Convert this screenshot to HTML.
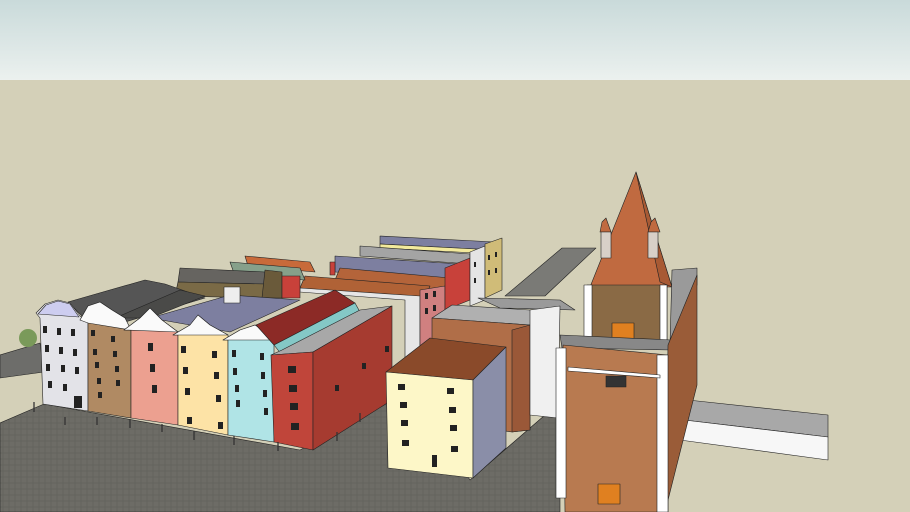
<!DOCTYPE html>
<html><head><meta charset="utf-8"><style>html,body{margin:0;padding:0;width:910px;height:512px;overflow:hidden}svg{display:block}</style></head>
<body>
<svg width="910" height="512" viewBox="0 0 910 512" xmlns="http://www.w3.org/2000/svg" stroke="#222" stroke-width="0.6" stroke-linejoin="round">
<defs>
<linearGradient id="sky" x1="0" y1="0" x2="0" y2="1"><stop offset="0" stop-color="#c9dada"/><stop offset="1" stop-color="#ecf1ef"/></linearGradient>
<pattern id="pav" width="6" height="6" patternUnits="userSpaceOnUse"><rect width="6" height="6" fill="#6d6c66" stroke="none"/><path d="M0 3h6M3 0v6" stroke="#62615b" stroke-width="0.7"/></pattern>
</defs>
<rect x="0" y="0" width="910" height="81" fill="url(#sky)" stroke="none"/>
<rect x="0" y="80" width="910" height="432" fill="#d4d0b8" stroke="none"/>
<polygon points="0,355 40,343 44,372 0,378" fill="#6d6d6a"/>
<polygon points="0,423 44,404 300,450 392,400 432,420 470,480 560,402 560,512 0,512" fill="url(#pav)"/>
<polygon points="505,296 562,248 596,248 545,296" fill="#7a7a76"/>
<polygon points="688,400 828,415 828,437 684,420" fill="#a8a8a8"/>
<polygon points="684,420 828,437 828,460 680,440" fill="#f7f7f7"/>
<polygon points="380,236 495,242 495,250 380,244" fill="#7d7fa0"/>
<polygon points="380,244 495,250 495,254 380,248" fill="#f3ea9c"/>
<polygon points="360,246 470,254 470,264 360,256" fill="#a4a4a4"/>
<polygon points="335,256 460,264 460,280 335,272" fill="#7d7fa0"/>
<polygon points="330,262 335,262 335,275 330,275" fill="#c8413a"/>
<polygon points="340,268 450,278 445,290 335,280" fill="#b4643a"/>
<polygon points="305,276 430,286 425,298 300,288" fill="#b06236"/>
<polygon points="300,288 420,296 420,360 405,365 405,300 300,292" fill="#e6e6e6"/>
<polygon points="420,290 445,286 445,350 420,360" fill="#d08080"/>
<polygon points="445,268 470,258 470,300 445,310" fill="#c8413a"/>
<polygon points="470,252 485,246 485,300 470,306" fill="#e4e4e4"/>
<polygon points="485,244 502,238 502,290 485,298" fill="#d0bc78"/>
<polygon points="245,256 310,262 315,272 248,266" fill="#c86a3a"/>
<polygon points="230,262 300,268 305,280 235,276" fill="#86a08a"/>
<polygon points="180,268 265,272 265,284 178,282" fill="#666460"/>
<polygon points="178,282 265,284 262,298 175,296" fill="#7a6a46"/>
<polygon points="265,270 282,272 282,298 262,298" fill="#6a5a3a"/>
<polygon points="282,276 300,276 300,298 282,298" fill="#c8413a"/>
<polygon points="68,302 145,280 165,284 205,298 125,322 88,322" fill="#555"/>
<polygon points="115,318 180,290 205,296 150,318" fill="#4a4a48"/>
<polygon points="150,318 230,295 300,300 230,332" fill="#7d7fa0"/>
<rect x="224" y="287" width="16" height="16" fill="#eee"/>
<polygon points="432,318 452,305 560,312 530,325" fill="#b0b0b0"/>
<polygon points="478,298 560,300 575,310 500,308" fill="#9a9a9a"/>
<polygon points="432,318 530,325 530,430 512,432 432,420" fill="#b06e48"/>
<polygon points="512,330 530,325 530,430 512,432" fill="#9a5838"/>
<polygon points="530,310 560,306 558,418 530,415" fill="#f0f0f0"/>
<polygon points="36,313 45,304 58,300 70,303 80,316 88,322 88,411 43,404 40,318" fill="#e3e3e8"/>
<polygon points="38,314 46,305 58,301 70,304 79,317" fill="#cdcdf0"/>
<polygon points="80,320 88,306 100,302 112,310 125,318 131,330 131,418 88,411 88,322" fill="#b08a63"/>
<polygon points="80,320 88,306 100,302 112,310 125,318 131,330 88,323" fill="#fafafa"/>
<polygon points="124,330 140,318 150,308 162,320 178,332 178,425 131,418 131,330" fill="#eca090"/>
<polygon points="124,330 140,318 150,308 162,320 178,332" fill="#fafafa"/>
<polygon points="173,335 190,325 198,315 210,325 228,335 228,435 178,425 178,335" fill="#fde3a6"/>
<polygon points="173,335 190,325 198,315 210,325 228,335" fill="#fafafa"/>
<polygon points="223,340 240,330 255,325 270,335 274,340 274,442 228,435 228,340" fill="#b0e4e6"/>
<polygon points="223,340 240,330 255,325 270,335 274,340" fill="#fafafa"/>
<polygon points="256,325 335,290 355,303 274,345" fill="#8c2a26"/>
<polygon points="274,345 355,303 360,312 282,355" fill="#84c8c6"/>
<polygon points="271,355 282,350 360,310 392,306 313,352" fill="#a8a8a8"/>
<polygon points="271,355 313,352 313,450 274,442" fill="#c0453a"/>
<polygon points="313,352 392,306 392,400 313,450" fill="#a63b30"/>
<polygon points="386,372 430,338 506,347 473,380" fill="#8a4a2a"/>
<polygon points="386,372 473,380 473,478 388,468" fill="#fdf7c8"/>
<polygon points="473,380 506,347 506,448 473,478" fill="#8a8ea8"/>
<polygon points="636,172 590,287 672,287" fill="#c06a40"/>
<polygon points="636,172 672,287 660,282" fill="#a85a34"/>
<polygon points="602,222 606,218 611,232 600,232" fill="#c06a40"/>
<rect x="601" y="232" width="10" height="26" fill="#d8d0c8"/>
<polygon points="651,222 655,218 660,232 648,232" fill="#c06a40"/>
<rect x="648" y="232" width="10" height="26" fill="#d8d0c8"/>
<rect x="587" y="285" width="80" height="60" fill="#8a6a45"/>
<rect x="584" y="285" width="8" height="55" fill="#fff"/>
<rect x="660" y="285" width="7" height="55" fill="#fff"/>
<rect x="612" y="323" width="22" height="18" fill="#e08020"/>
<polygon points="672,270 697,268 697,285 670,345" fill="#9a9a9a"/>
<polygon points="560,335 672,340 672,350 562,348" fill="#888"/>
<polygon points="563,345 668,355 668,512 565,512" fill="#b87a50"/>
<polygon points="668,345 697,275 697,385 665,512" fill="#9a5c38"/>
<rect x="556" y="348" width="10" height="150" fill="#fff"/>
<rect x="657" y="355" width="11" height="157" fill="#fff"/>
<polygon points="568,367 660,375 660,378 568,371" fill="#fff"/>
<rect x="606" y="376" width="20" height="11" fill="#333"/>
<rect x="598" y="484" width="22" height="20" fill="#e08020"/>
<g fill="#222" stroke="none">
<rect x="43" y="326" width="4" height="7"/><rect x="57" y="328" width="4" height="7"/><rect x="71" y="329" width="4" height="7"/>
<rect x="45" y="345" width="4" height="7"/><rect x="59" y="347" width="4" height="7"/><rect x="73" y="349" width="4" height="7"/>
<rect x="46" y="364" width="4" height="7"/><rect x="61" y="365" width="4" height="7"/><rect x="75" y="367" width="4" height="7"/>
<rect x="48" y="381" width="4" height="7"/><rect x="63" y="384" width="4" height="7"/><rect x="74" y="396" width="8" height="12"/>
<rect x="91" y="330" width="4" height="6"/><rect x="111" y="336" width="4" height="6"/><rect x="93" y="349" width="4" height="6"/><rect x="113" y="351" width="4" height="6"/>
<rect x="95" y="362" width="4" height="6"/><rect x="115" y="366" width="4" height="6"/><rect x="97" y="378" width="4" height="6"/><rect x="116" y="380" width="4" height="6"/><rect x="98" y="392" width="4" height="6"/>
<rect x="148" y="343" width="5" height="8"/><rect x="150" y="364" width="5" height="8"/><rect x="152" y="385" width="5" height="8"/>
<rect x="181" y="346" width="5" height="7"/><rect x="212" y="351" width="5" height="7"/><rect x="183" y="367" width="5" height="7"/><rect x="214" y="372" width="5" height="7"/>
<rect x="185" y="388" width="5" height="7"/><rect x="216" y="395" width="5" height="7"/><rect x="187" y="417" width="5" height="7"/><rect x="218" y="422" width="5" height="7"/>
<rect x="232" y="350" width="4" height="7"/><rect x="260" y="353" width="4" height="7"/><rect x="233" y="368" width="4" height="7"/><rect x="261" y="372" width="4" height="7"/>
<rect x="235" y="385" width="4" height="7"/><rect x="263" y="390" width="4" height="7"/><rect x="236" y="400" width="4" height="7"/><rect x="264" y="408" width="4" height="7"/>
<rect x="288" y="366" width="8" height="7"/><rect x="289" y="385" width="8" height="7"/><rect x="290" y="403" width="8" height="7"/><rect x="291" y="423" width="8" height="7"/>
<rect x="335" y="385" width="4" height="6"/><rect x="362" y="363" width="4" height="6"/><rect x="385" y="346" width="4" height="6"/>
<rect x="398" y="384" width="7" height="6"/><rect x="447" y="388" width="7" height="6"/><rect x="400" y="402" width="7" height="6"/><rect x="449" y="407" width="7" height="6"/>
<rect x="401" y="420" width="7" height="6"/><rect x="450" y="425" width="7" height="6"/><rect x="402" y="440" width="7" height="6"/><rect x="451" y="446" width="7" height="6"/>
<rect x="432" y="455" width="5" height="12"/>
<rect x="425" y="293" width="3" height="6"/><rect x="433" y="291" width="3" height="6"/><rect x="425" y="308" width="3" height="6"/><rect x="433" y="305" width="3" height="6"/>
<rect x="488" y="255" width="2" height="5"/><rect x="495" y="252" width="2" height="5"/><rect x="488" y="270" width="2" height="5"/><rect x="495" y="268" width="2" height="5"/>
<rect x="474" y="262" width="2" height="5"/><rect x="474" y="278" width="2" height="5"/>
</g>
<circle cx="28" cy="338" r="9" fill="#7a9a5a" stroke="none"/>
<g stroke="#333" stroke-width="1.3">
<line x1="34" y1="402" x2="34" y2="412"/><line x1="65" y1="417" x2="65" y2="425"/><line x1="97" y1="417" x2="97" y2="425"/>
<line x1="130" y1="419" x2="130" y2="428"/><line x1="162" y1="424" x2="162" y2="432"/><line x1="194" y1="431" x2="194" y2="440"/>
<line x1="234" y1="436" x2="234" y2="445"/><line x1="278" y1="442" x2="278" y2="451"/><line x1="337" y1="432" x2="337" y2="441"/><line x1="360" y1="413" x2="360" y2="422"/>
</g>
</svg>
</body></html>
